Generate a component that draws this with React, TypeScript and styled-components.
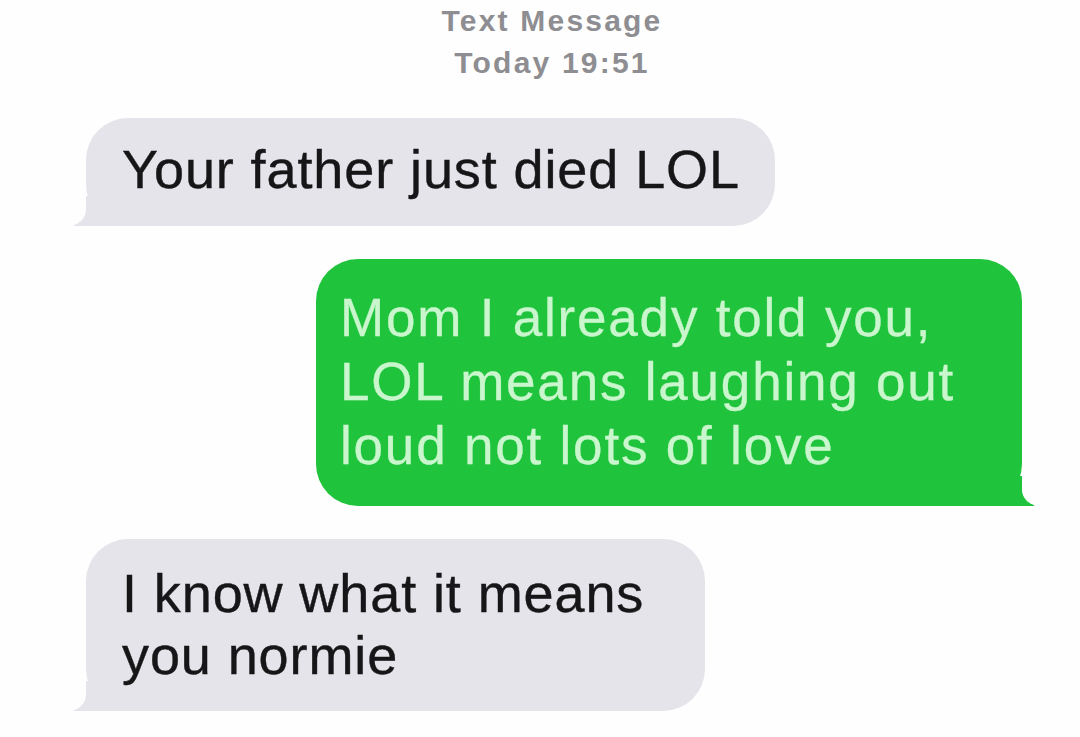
import React from "react";
import styled, { createGlobalStyle, css } from "styled-components";

const GlobalStyle = createGlobalStyle`
  html, body {
    margin: 0;
    padding: 0;
    background: #ffffff;
  }

  body {
    font-family: "Liberation Sans", Arial, Helvetica, sans-serif;
    -webkit-font-smoothing: antialiased;
  }
`;

const PAGE_BG = "#fefefe";
const GREY = "#e4e4ea";
const GREEN = "#1fc33c";

const Screen = styled.div`
  width: 1080px;
  height: 737px;
  overflow: hidden;
  display: flex;
  flex-direction: column;
  background: ${PAGE_BG};
  box-sizing: border-box;
`;

const Header = styled.header`
  display: flex;
  flex-direction: column;
  align-items: center;
  padding-left: 24px;
  margin-bottom: 34px;
  color: #8e8e92;
  font-size: 30px;
  font-weight: 700;
  line-height: 42px;
  letter-spacing: 2.2px;

  span {
    display: block;
  }
`;

const Thread = styled.div`
  display: flex;
  flex-direction: column;
  gap: 33px;
`;

type Side = "in" | "out";

// the little tail at the bottom corner, carved out of a square with a white block
const tail = (side: "left" | "right", color: string) => css`
  &::before {
    content: "";
    position: absolute;
    bottom: 0;
    ${side}: -12px;
    width: 60px;
    height: 30px;
    background: ${color};
  }

  &::after {
    content: "";
    position: absolute;
    bottom: 0;
    ${side}: -40px;
    width: 40px;
    height: 34px;
    background: ${PAGE_BG};
    border-bottom-${side === "left" ? "right" : "left"}-radius: 18px 16px;
  }
`;

const Bubble = styled.div<{ side: Side; width: number; pad: string }>`
  position: relative;
  box-sizing: border-box;
  width: ${({ width }) => width}px;
  padding: ${({ pad }) => pad};
  border-radius: 42px;
  white-space: pre-line;

  ${({ side }) =>
    side === "in"
      ? css`
          align-self: flex-start;
          margin-left: 86px;
          background: ${GREY};
          color: #161618;
          font-size: 54px;
          line-height: 62px;
          letter-spacing: 0.9px;
          -webkit-text-stroke: 0.4px #161618;
          ${tail("left", GREY)}
        `
      : css`
          align-self: flex-end;
          margin-right: 58px;
          background: ${GREEN};
          color: #c9f6cd;
          font-size: 53px;
          line-height: 64px;
          letter-spacing: 1.8px;
          -webkit-text-stroke: 0.3px #c9f6cd;
          ${tail("right", GREEN)}
        `}
`;

const BubbleText = styled.span`
  position: relative;
  z-index: 1;
`;

interface Message {
  id: number;
  side: Side;
  text: string;
  width: number;
  pad: string;
}

const messages: Message[] = [
  {
    id: 1,
    side: "in",
    text: "Your father just died LOL",
    width: 689,
    pad: "20px 20px 26px 36px",
  },
  {
    id: 2,
    side: "out",
    text: "Mom I already told you,\nLOL means laughing out\nloud not lots of love",
    width: 706,
    pad: "27px 20px 28px 24px",
  },
  {
    id: 3,
    side: "in",
    text: "I know what it means\nyou normie",
    width: 619,
    pad: "23px 20px 25px 36px",
  },
];

const App = () => {
  return (
    <>
      <GlobalStyle />
      <Screen>
        <Header>
          <span>Text Message</span>
          <span>Today 19:51</span>
        </Header>
        <Thread>
          {messages.map((m) => (
            <Bubble key={m.id} side={m.side} width={m.width} pad={m.pad}>
              <BubbleText>{m.text}</BubbleText>
            </Bubble>
          ))}
        </Thread>
      </Screen>
    </>
  );
};

export default App;
